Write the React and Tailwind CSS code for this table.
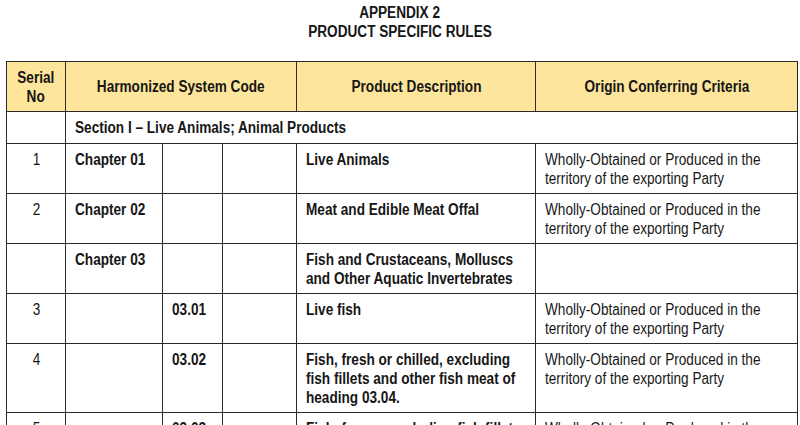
import React from "react";

const font = { fontFamily: '"Liberation Sans", Arial, sans-serif' };

const rows = [
  { sn: "1", ch: "Chapter 01", h: "", desc: ["Live Animals"], crit: true },
  { sn: "2", ch: "Chapter 02", h: "", desc: ["Meat and Edible Meat Offal"], crit: true },
  { sn: "", ch: "Chapter 03", h: "", desc: ["Fish and Crustaceans, Molluscs", "and Other Aquatic Invertebrates"], crit: false },
  { sn: "3", ch: "", h: "03.01", desc: ["Live fish"], crit: true },
  { sn: "4", ch: "", h: "03.02", desc: ["Fish, fresh or chilled, excluding", "fish fillets and other fish meat of", "heading 03.04."], crit: true },
  { sn: "5", ch: "", h: "03.03", desc: ["Fish, frozen, excluding fish fillets", "and other fish meat of heading", "03.04."], crit: true },
];

function L({ children, center }) {
  return (
    <div className="h-[19px] whitespace-nowrap">
      <span className={"inline-block whitespace-nowrap scale-x-[0.85] " + (center ? "origin-center" : "origin-left")}>
        {children}
      </span>
    </div>
  );
}

const cell = "border border-[#2a2a2a] align-top px-[9px] pt-[6px] pb-[5px] overflow-visible";
const hcell = "border border-[#2a2a2a] font-bold text-center align-middle";

export default function App() {
  return (
    <div className="w-[800px] h-[425px] overflow-hidden bg-white text-[#161616] text-[16px] leading-[19px]" style={font}>
      <div className="pt-[3px] text-center font-bold">
        <L center>APPENDIX 2</L>
        <L center>PRODUCT SPECIFIC RULES</L>
      </div>
      <div className="pl-[6px] mt-[20px]">
        <table className="border-collapse table-fixed w-[791px]">
          <colgroup>
            <col className="w-[59px]" />
            <col className="w-[97px]" />
            <col className="w-[60px]" />
            <col className="w-[74px]" />
            <col className="w-[239px]" />
            <col className="w-[262px]" />
          </colgroup>
          <thead>
            <tr className="bg-[#fde59b] h-[50px]">
              <th className={hcell}>
                <L center>Serial</L>
                <L center>No</L>
              </th>
              <th colSpan={3} className={hcell}>
                <L center>Harmonized System Code</L>
              </th>
              <th className={hcell}>
                <L center>Product Description</L>
              </th>
              <th className={hcell}>
                <L center>Origin Conferring Criteria</L>
              </th>
            </tr>
          </thead>
          <tbody>
            <tr className="h-[32px]">
              <td className={cell}></td>
              <td colSpan={5} className={cell + " font-bold"}>
                <L>Section I – Live Animals; Animal Products</L>
              </td>
            </tr>
            {rows.map((r, i) => (
              <tr key={i}>
                <td className={cell + " text-center"}>{r.sn ? <L center>{r.sn}</L> : null}</td>
                <td className={cell + " font-bold"}>{r.ch ? <L>{r.ch}</L> : null}</td>
                <td className={cell + " font-bold"}>{r.h ? <L>{r.h}</L> : null}</td>
                <td className={cell}></td>
                <td className={cell + " font-bold"}>
                  {r.desc.map((d, j) => (
                    <L key={j}>{d}</L>
                  ))}
                </td>
                <td className={cell}>
                  {r.crit ? (
                    <>
                      <L>Wholly-Obtained or Produced in the</L>
                      <L>territory of the exporting Party</L>
                    </>
                  ) : (
                    <>
                      <L>&nbsp;</L>
                      <L>&nbsp;</L>
                    </>
                  )}
                </td>
              </tr>
            ))}
          </tbody>
        </table>
      </div>
    </div>
  );
}
